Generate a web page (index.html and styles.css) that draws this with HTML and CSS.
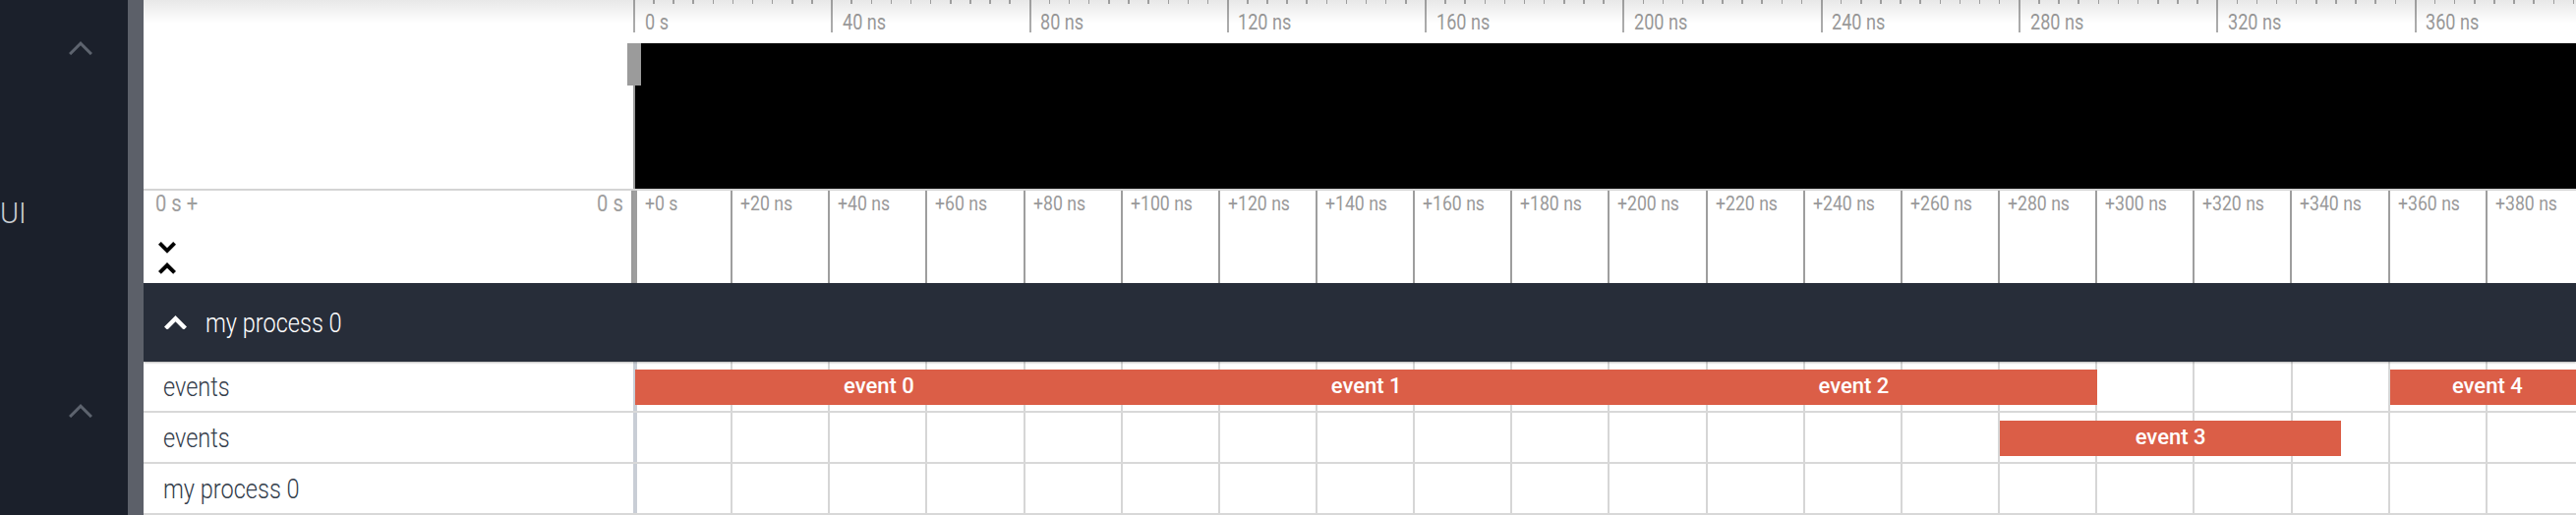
FILE: index.html
```html
<!DOCTYPE html>
<html>
<head>
<meta charset="utf-8">
<title>Timeline</title>
<link rel="stylesheet" href="styles.css">
</head>
<body>
<div class="app">
  <nav class="sidebar">
    <svg class="sb-chev sb-chev-1" viewBox="0 0 24 14.12"><polygon points="12,0 0,12 2.12,14.12 12,4.24 21.88,14.12 24,12"/></svg>
    <div class="sb-label">UI</div>
    <svg class="sb-chev sb-chev-2" viewBox="0 0 24 14.12"><polygon points="12,0 0,12 2.12,14.12 12,4.24 21.88,14.12 24,12"/></svg>
  </nav>
  <div class="strip"></div>
  <main class="main">
    <div class="top-shadow"></div>

    <section class="overview">
      <div class="panel"></div>
      <div class="ov-timeline">
        <div class="ov-axis">
          <div class="ov-cell"><span class="lbl">0 s</span></div>
          <div class="ov-cell"><span class="lbl">40 ns</span></div>
          <div class="ov-cell"><span class="lbl">80 ns</span></div>
          <div class="ov-cell"><span class="lbl">120 ns</span></div>
          <div class="ov-cell"><span class="lbl">160 ns</span></div>
          <div class="ov-cell"><span class="lbl">200 ns</span></div>
          <div class="ov-cell"><span class="lbl">240 ns</span></div>
          <div class="ov-cell"><span class="lbl">280 ns</span></div>
          <div class="ov-cell"><span class="lbl">320 ns</span></div>
          <div class="ov-cell"><span class="lbl">360 ns</span></div>
        </div>
        <div class="ov-canvas"><div class="handle"></div></div>
      </div>
    </section>

    <section class="axis">
      <div class="panel axis-panel">
        <div class="axis-top">
          <span class="lbl">0 s +</span>
          <span class="lbl lbl-r">0 s</span>
        </div>
        <div class="axis-chevs">
          <svg class="ax-chev" viewBox="0 0 18 11.83"><polygon points="9,11.83 0,2.83 2.83,0 9,6.17 15.17,0 18,2.83"/></svg>
          <svg class="ax-chev ax-chev-up" viewBox="0 0 18 11.83"><polygon points="9,0 0,9 2.83,11.83 9,5.66 15.17,11.83 18,9"/></svg>
        </div>
      </div>
      <div class="axis-ticks">
        <div class="ax-cell"><span class="lbl">+0 s</span></div>
        <div class="ax-cell"><span class="lbl">+20 ns</span></div>
        <div class="ax-cell"><span class="lbl">+40 ns</span></div>
        <div class="ax-cell"><span class="lbl">+60 ns</span></div>
        <div class="ax-cell"><span class="lbl">+80 ns</span></div>
        <div class="ax-cell"><span class="lbl">+100 ns</span></div>
        <div class="ax-cell"><span class="lbl">+120 ns</span></div>
        <div class="ax-cell"><span class="lbl">+140 ns</span></div>
        <div class="ax-cell"><span class="lbl">+160 ns</span></div>
        <div class="ax-cell"><span class="lbl">+180 ns</span></div>
        <div class="ax-cell"><span class="lbl">+200 ns</span></div>
        <div class="ax-cell"><span class="lbl">+220 ns</span></div>
        <div class="ax-cell"><span class="lbl">+240 ns</span></div>
        <div class="ax-cell"><span class="lbl">+260 ns</span></div>
        <div class="ax-cell"><span class="lbl">+280 ns</span></div>
        <div class="ax-cell"><span class="lbl">+300 ns</span></div>
        <div class="ax-cell"><span class="lbl">+320 ns</span></div>
        <div class="ax-cell"><span class="lbl">+340 ns</span></div>
        <div class="ax-cell"><span class="lbl">+360 ns</span></div>
        <div class="ax-cell"><span class="lbl">+380 ns</span></div>
      </div>
    </section>

    <section class="group-header">
      <svg class="grp-chev" viewBox="0 0 23 14.68"><polygon points="11.5,0 0,11.5 3.18,14.68 11.5,6.36 19.82,14.68 23,11.5"/></svg>
      <span class="lbl">my process 0</span>
    </section>

    <section class="track">
      <div class="panel track-name"><span class="lbl">events</span></div>
      <div class="track-lane">
        <div class="slice" style="left:2px;width:495.75px">event 0</div>
        <div class="slice" style="left:497.75px;width:495.75px">event 1</div>
        <div class="slice" style="left:993.5px;width:495.75px">event 2</div>
        <div class="slice" style="left:1786.7px;width:198.3px">event 4</div>
      </div>
    </section>

    <section class="track">
      <div class="panel track-name"><span class="lbl">events</span></div>
      <div class="track-lane">
        <div class="slice" style="left:1390.1px;width:347px">event 3</div>
      </div>
    </section>

    <section class="track">
      <div class="panel track-name"><span class="lbl">my process 0</span></div>
      <div class="track-lane"></div>
    </section>
  </main>
</div>
</body>
</html>
```

FILE: styles.css
```css
html, body {
  margin: 0;
  padding: 0;
  width: 2620px;
  height: 524px;
  overflow: hidden;
  background: #fff;
  font-family: Roboto, "Noto Sans", "Liberation Sans", sans-serif;
}

.app {
  display: flex;
  width: 2620px;
  height: 524px;
}

/* ---------- sidebar ---------- */
.sidebar {
  width: 130px;
  flex: none;
  background: #1b202b;
  overflow: hidden;
}

.sb-chev {
  display: block;
  width: 24px;
  height: 14.12px;
  margin-left: 70px;
  fill: #5d636e;
}

.sb-chev-1 { margin-top: 42px; }
.sb-chev-2 { margin-top: 176.6px; }

.sb-label {
  margin-top: 144.3px;
  margin-left: 0;
  font-size: 29px;
  line-height: 34px;
  font-weight: 300;
  color: #c9ccd2;
}

.strip {
  width: 16px;
  flex: none;
  background: #5c6069;
}

/* ---------- main ---------- */
.main {
  flex: 1;
  min-width: 0;
  position: relative;
  display: flex;
  flex-direction: column;
  overflow: hidden;
}

.top-shadow {
  position: absolute;
  left: 0;
  right: 0;
  top: 0;
  height: 24px;
  background: linear-gradient(rgba(0, 0, 0, 0.09), rgba(0, 0, 0, 0));
  pointer-events: none;
  z-index: 5;
}

.panel {
  width: 498px;
  flex: none;
  box-sizing: border-box;
}

.lbl {
  display: inline-block;
  white-space: nowrap;
  transform: scaleX(0.84);
  transform-origin: 0 50%;
}

.lbl-r {
  transform-origin: 100% 50%;
}

/* overview */
.overview {
  flex: none;
  height: 192px;
  display: flex;
  border-bottom: 2px solid #d4d4d4;
}

.ov-timeline {
  flex: 1;
  min-width: 0;
  display: flex;
  flex-direction: column;
}

.ov-axis {
  height: 44px;
  flex: none;
  display: flex;
  overflow: hidden;
  background: repeating-linear-gradient(90deg, #ababab 0 1.5px, transparent 1.5px 20.13px) 0 0 / 100% 4px no-repeat;
}

.ov-cell {
  flex: none;
  width: 201.3px;
  height: 33px;
  box-sizing: border-box;
  border-left: 2px solid #ababab;
  padding: 10.5px 0 0 9.5px;
  font-size: 21.5px;
  line-height: 24px;
  color: #999;
}

.ov-canvas {
  flex: 1;
  position: relative;
  background: #000;
  border-left: 2px solid #9a9a9a;
}

.handle {
  position: absolute;
  left: -8px;
  top: 0;
  width: 14px;
  height: 43px;
  background: #9b9b9b;
}

/* detail axis */
.axis {
  flex: none;
  height: 94px;
  display: flex;
}

.axis-panel {
  border-right: 2px solid #9a9a9a;
  padding: 0 8px 0 11.5px;
}

.axis-top {
  display: flex;
  justify-content: space-between;
  font-size: 24px;
  line-height: 27px;
  color: #9e9e9e;
}

.axis-chevs {
  margin-top: 25px;
  margin-left: 3.5px;
}

.ax-chev {
  display: block;
  width: 18px;
  height: 11.83px;
  fill: #000;
}

.ax-chev-up {
  margin-top: 9.2px;
}

.axis-ticks {
  flex: 1;
  min-width: 0;
  display: flex;
  overflow: hidden;
}

.ax-cell {
  flex: none;
  width: 99.15px;
  box-sizing: border-box;
  border-left: 2px solid #9e9e9e;
  padding: 1px 0 0 8px;
  font-size: 21px;
  line-height: 24px;
  color: #999;
}

.ax-cell:first-child {
  border-left-width: 4px;
}

/* group header */
.group-header {
  flex: none;
  height: 80px;
  box-sizing: border-box;
  display: flex;
  align-items: center;
  gap: 19px;
  padding-left: 21px;
  background: #272d39;
  color: #fff;
  font-size: 28px;
  font-weight: 300;
  box-shadow: 0 1px 2px rgba(0, 0, 0, 0.3);
  position: relative;
  z-index: 2;
}

.grp-chev {
  width: 23px;
  height: 14.68px;
  flex: none;
  fill: #fff;
}

/* tracks */
.track {
  flex: none;
  height: 52px;
  box-sizing: border-box;
  display: flex;
  border-bottom: 2px solid #d8d8d8;
}

.track-name {
  display: flex;
  align-items: center;
  padding-left: 20px;
  font-size: 28px;
  font-weight: 300;
  color: #343d4b;
}

.track-lane {
  flex: 1;
  min-width: 0;
  position: relative;
  overflow: hidden;
  background:
    linear-gradient(#c9ced6, #c9ced6) 0 0 / 4px 100% no-repeat,
    repeating-linear-gradient(90deg, #d6d6d6 0 2px, transparent 2px 99.15px);
}

.slice {
  position: absolute;
  top: 8px;
  height: 36px;
  background: #db5e47;
  color: #fff;
  font-size: 22px;
  font-weight: 500;
  line-height: 34px;
  text-align: center;
  white-space: nowrap;
  overflow: hidden;
}
```
